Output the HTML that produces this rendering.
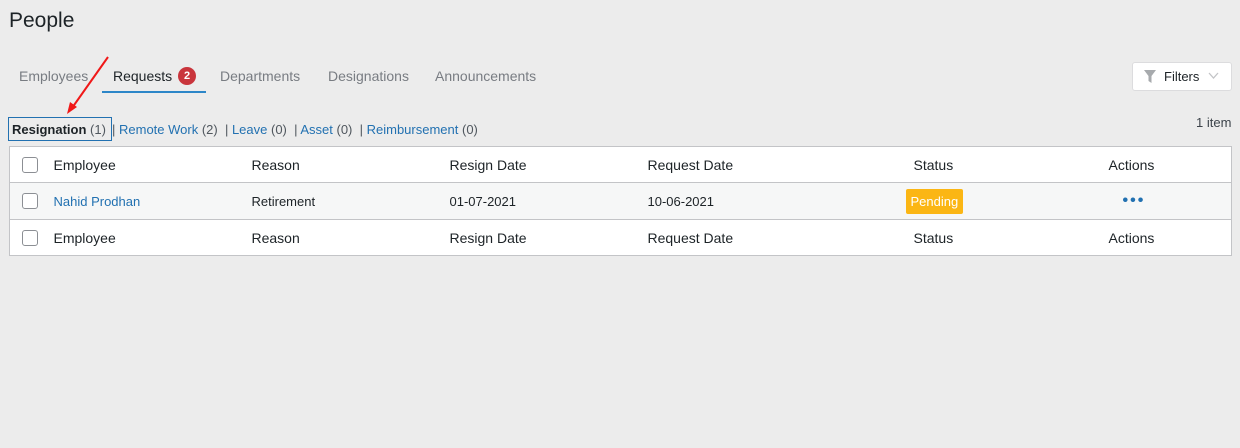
<!DOCTYPE html>
<html><head><style>
*{box-sizing:border-box;margin:0;padding:0}
body{width:1240px;height:448px;background:#ececec;font-family:"Liberation Sans",sans-serif;color:#1d2327;position:relative;overflow:hidden}
.a{position:absolute;white-space:nowrap}
h1{position:absolute;left:9px;top:9px;font-size:21px;font-weight:400}
.tab{font-size:14px;color:#787c82;top:68px}
.sub{font-size:13px;top:122px}
.sub a{color:#2271b1;text-decoration:none}
table{position:absolute;left:9px;top:146px;width:1223px;border:1px solid #c3c4c7;border-collapse:collapse;background:#fff;font-size:14px}
td{height:36px;padding:0}
tr.b td{background:#f6f7f7;border-top:1px solid #c3c4c7;border-bottom:1px solid #c3c4c7;font-size:13px;height:37px}
.cb{display:inline-block;width:16px;height:16px;border:1px solid #8c8f94;border-radius:3px;background:#fff;vertical-align:middle;margin-left:12px}
</style></head><body>
<h1>People</h1>
<div class="a tab" style="left:19px">Employees</div>
<div class="a tab" style="left:113px;color:#1d2327">Requests</div>
<div class="a" style="left:178px;top:67px;width:18px;height:18px;border-radius:9px;background:#c9353c;color:#fff;font-size:11px;font-weight:bold;text-align:center;line-height:18px">2</div>
<div class="a" style="left:102px;top:91px;width:104px;height:2px;background:#2c86c8"></div>
<div class="a tab" style="left:220px">Departments</div>
<div class="a tab" style="left:328px">Designations</div>
<div class="a tab" style="left:435px">Announcements</div>
<svg class="a" style="left:0;top:50px" width="120" height="70"><line x1="108" y1="7" x2="72" y2="58" stroke="#f01818" stroke-width="2"/><polygon points="67,64 70,52 77,57" fill="#f01818"/></svg>
<div class="a" style="left:1132px;top:62px;width:100px;height:29px;background:#fff;border:1px solid #dcdcde;border-radius:3px"></div>
<svg class="a" style="left:1144px;top:70px" width="12" height="13"><path d="M0 0H12L7.5 6V13L4.5 11V6Z" fill="#a7aaad"/></svg>
<div class="a" style="left:1164px;top:69px;font-size:13px">Filters</div>
<svg class="a" style="left:1208px;top:72px" width="11" height="8"><path d="M1 1L5.5 6L10 1" stroke="#c3c4c7" fill="none" stroke-width="1.3"/></svg>
<div class="a" style="left:8px;top:117px;width:104px;height:24px;border:1px solid #2271b1"></div>
<div class="a sub" style="left:12px"><b>Resignation</b> <span style="color:#50575e">(1)</span></div>
<div class="a sub" style="left:112px;color:#50575e">| <a>Remote Work</a> (2) &nbsp;| <a>Leave</a> (0) &nbsp;| <a>Asset</a> (0) &nbsp;| <a>Reimbursement</a> (0)</div>
<div class="a" style="left:1196px;top:115px;font-size:13px;color:#3c434a">1 item</div>
<table>
<tr><td style="width:44px"><span class="cb"></span></td><td style="width:198px">Employee</td><td style="width:198px">Reason</td><td style="width:198px">Resign Date</td><td style="width:222px">Request Date</td><td style="width:239px;padding-left:44px">Status</td><td>Actions</td></tr>
<tr class="b"><td><span class="cb"></span></td><td style="color:#2271b1">Nahid Prodhan</td><td>Retirement</td><td>01-07-2021</td><td>10-06-2021</td><td style="padding-left:36px"><span style="background:#fbb614;color:#fff;padding:5px 5px;border-radius:2px;font-size:13px">Pending</span></td><td style="padding-left:14px;color:#2271b1;font-weight:bold;font-size:16px;letter-spacing:2px">•••</td></tr>
<tr><td><span class="cb"></span></td><td>Employee</td><td>Reason</td><td>Resign Date</td><td>Request Date</td><td style="padding-left:44px">Status</td><td>Actions</td></tr>
</table>
</body></html>
